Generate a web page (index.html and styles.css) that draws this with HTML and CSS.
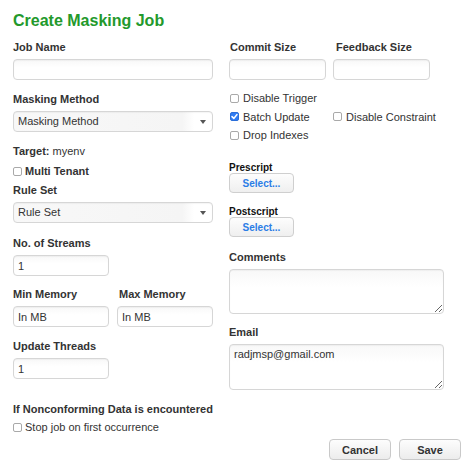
FILE: index.html
```html
<!DOCTYPE html>
<html>
<head>
<meta charset="utf-8">
<link rel="stylesheet" href="styles.css">
</head>
<body>
<div class="page">
  <h1 class="title">Create Masking Job</h1>
  <div class="form">
    <div class="col">
      <div class="field">
        <div class="label">Job Name</div>
        <input class="input full" type="text">
      </div>
      <div class="field gap12">
        <div class="label">Masking Method</div>
        <div class="select full"><span>Masking Method</span></div>
      </div>
      <div class="target gap12"><b>Target:</b> myenv</div>
      <label class="check bold multi"><span class="box"></span>Multi Tenant</label>
      <div class="field gap5">
        <div class="label">Rule Set</div>
        <div class="select full"><span>Rule Set</span></div>
      </div>
      <div class="field gap13">
        <div class="label">No. of Streams</div>
        <input class="input half" type="text" value="1">
      </div>
      <div class="pair gap11">
        <div class="field">
          <div class="label">Min Memory</div>
          <input class="input half" type="text" value="In MB">
        </div>
        <div class="field">
          <div class="label shift2">Max Memory</div>
          <input class="input half" type="text" value="In MB">
        </div>
      </div>
      <div class="field gap12">
        <div class="label">Update Threads</div>
        <input class="input half" type="text" value="1">
      </div>
      <div class="label gap23 nomb">If Nonconforming Data is encountered</div>
      <label class="check stop"><span class="box"></span>Stop job on first occurrence</label>
    </div>

    <div class="col">
      <div class="pair wide">
        <div class="field">
          <div class="label shift1">Commit Size</div>
          <input class="input box97" type="text">
        </div>
        <div class="field">
          <div class="label shift3">Feedback Size</div>
          <input class="input box97" type="text">
        </div>
      </div>
      <div class="checks">
        <label class="check row"><span class="box"></span>Disable Trigger</label>
        <div class="checkpair">
          <label class="check row"><span class="box on"><svg viewBox="0 0 9 9" width="9" height="9"><path d="M2 4.6 L3.8 6.4 L7 2.6" fill="none" stroke="#fff" stroke-width="1.5" stroke-linecap="round" stroke-linejoin="round"/></svg></span>Batch Update</label>
          <label class="check row"><span class="box"></span>Disable Constraint</label>
        </div>
        <label class="check row"><span class="box"></span>Drop Indexes</label>
      </div>
      <div class="small-label pre">Prescript</div>
      <button class="pick" type="button">Select...</button>
      <div class="small-label post">Postscript</div>
      <button class="pick" type="button">Select...</button>
      <div class="field gap13">
        <div class="label">Comments</div>
        <textarea class="area comments"></textarea>
      </div>
      <div class="field gap11">
        <div class="label">Email</div>
        <textarea class="area email">radjmsp@gmail.com</textarea>
      </div>
      <div class="actions">
        <button class="btn" type="button">Cancel</button>
        <button class="btn" type="button">Save</button>
      </div>
    </div>
  </div>
</div>
</body>
</html>
```

FILE: styles.css
```css
* { box-sizing: border-box; }
html, body { margin: 0; padding: 0; background: #fff; }
body {
  font-family: "Liberation Sans", Arial, Helvetica, sans-serif;
  font-size: 11px;
  color: #333;
}
.page { padding: 11px 13px 0; width: 474px; height: 476px; overflow: hidden; }
.title {
  margin: 0;
  font-size: 16px;
  line-height: 20px;
  font-weight: bold;
  color: #23992c;
}
.form {
  display: grid;
  grid-template-columns: 200px 232px;
  column-gap: 16px;
  margin-top: 9px;
}
.col { display: flex; flex-direction: column; align-items: flex-start; }
.field { display: flex; flex-direction: column; align-items: flex-start; }
.label {
  font-weight: bold;
  font-size: 11px;
  line-height: 14px;
  color: #333;
  margin-bottom: 5px;
  white-space: nowrap;
}
.label.nomb { margin-bottom: 0; }
.label.shift1 { padding-left: 1px; }
.label.shift2 { padding-left: 2px; }
.label.shift3 { padding-left: 3px; }
.gap5 { margin-top: 5px; }
.gap11 { margin-top: 11px; }
.gap12 { margin-top: 12px; }
.gap13 { margin-top: 13px; }
.gap23 { margin-top: 23px; }

.input, .select, .area {
  border: 1px solid #d6d6d6;
  border-radius: 4px;
  background: linear-gradient(#f8f8f8, #fff 40%);
  box-shadow: inset 0 1px 1px rgba(0,0,0,0.04);
  font-family: inherit;
  font-size: 11px;
  color: #333;
  outline: none;
}
.input { height: 21px; padding: 0 4px; margin: 0; }
.full { width: 200px; }
.half { width: 96px; }
.box97 { width: 97px; }

.select {
  position: relative;
  height: 21px;
  line-height: 19px;
  padding: 0 4px;
  background: linear-gradient(to right, #f8f8f8 0%, #f5f5f5 85%, #fff 91%, #fff 100%);
}
.select::after {
  content: "";
  position: absolute;
  right: 6px;
  top: 8px;
  border-left: 3px solid transparent;
  border-right: 3px solid transparent;
  border-top: 4px solid #555;
}

.target { line-height: 14px; color: #333; }
.target b { font-weight: bold; }

.check {
  display: flex;
  align-items: center;
  line-height: 14px;
  white-space: nowrap;
  color: #333;
}
.check.bold { font-weight: bold; }
.multi { margin-top: 6px; }
.stop { margin-top: 4px; }
.box {
  display: inline-flex;
  width: 9px;
  height: 9px;
  border: 1px solid #a9a9a9;
  border-radius: 2px;
  background: #fff;
  margin-right: 3px;
  flex: none;
}
.box svg { display: block; margin: -1px; }
.box.on { background: #2f7cf3; border-color: #2a6ed9; }

.pair { display: flex; gap: 8px; }
.pair.wide { gap: 7px; }

.checks { margin-top: 9px; display: flex; flex-direction: column; }
.check.row { line-height: 18px; height: 18.5px; }
.check.row .box { margin-left: 1px; margin-right: 4px; }
.checkpair { display: grid; grid-template-columns: 103px auto; }

.small-label {
  font-weight: bold;
  font-size: 10px;
  line-height: 11px;
  color: #111;
}
.small-label.pre { margin-top: 17.5px; }
.small-label.post { margin-top: 13px; }

.pick {
  width: 65px;
  height: 20px;
  margin: 0;
  padding: 0;
  border: 1px solid #cfcfcf;
  border-radius: 4px;
  background: linear-gradient(#fdfdfd, #efefef);
  font-family: inherit;
  font-weight: bold;
  font-size: 10px;
  color: #2b7de6;
}

.area {
  display: block;
  width: 215px;
  margin: 0;
  padding: 2px 4px;
  resize: both;
  line-height: 14px;
}
.comments { height: 45px; }
.email { height: 46px; }

.actions {
  align-self: stretch;
  display: flex;
  justify-content: flex-end;
  gap: 8px;
  margin-top: 49px;
}
.btn {
  width: 62px;
  height: 21px;
  margin: 0;
  padding: 0;
  border: 1px solid #c9c9c9;
  border-radius: 4px;
  background: linear-gradient(#fdfdfd, #ececec);
  font-family: inherit;
  font-weight: bold;
  font-size: 11px;
  color: #333;
}
```
